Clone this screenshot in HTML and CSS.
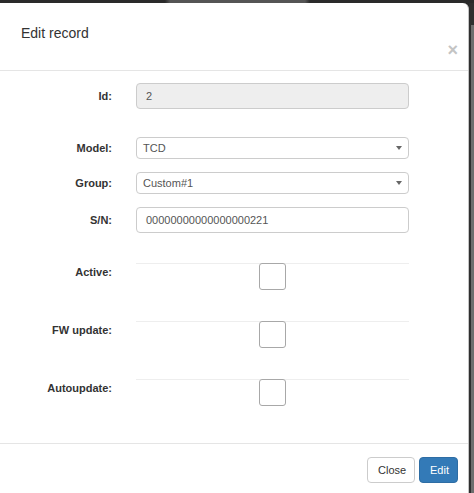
FILE: index.html
```html
<!DOCTYPE html>
<html lang="en">
<head>
<meta charset="utf-8">
<title>Edit record</title>
<link rel="stylesheet" href="styles.css">
</head>
<body>
<div class="page">
  <div class="topstrip"></div>
  <div class="main">
    <div class="modal">
      <div class="modal-header">
        <div class="modal-title">Edit record</div>
        <div class="close-row"><span class="close">&times;</span></div>
      </div>
      <div class="modal-body">
        <div class="row row-id">
          <div class="label">Id:</div>
          <div class="control input disabled">2</div>
        </div>
        <div class="row row-model">
          <div class="label">Model:</div>
          <div class="control select"><span>TCD</span><svg class="caret" width="6" height="4" viewBox="0 0 6 4"><path d="M0 0H6L3 4Z" fill="#666"/></svg></div>
        </div>
        <div class="row row-group">
          <div class="label">Group:</div>
          <div class="control select"><span>Custom#1</span><svg class="caret" width="6" height="4" viewBox="0 0 6 4"><path d="M0 0H6L3 4Z" fill="#666"/></svg></div>
        </div>
        <div class="row row-sn">
          <div class="label">S/N:</div>
          <div class="control input">00000000000000000221</div>
        </div>
        <div class="row check-row first-check">
          <div class="label">Active:</div>
          <div class="check-area"><span class="cb"></span></div>
        </div>
        <div class="row check-row">
          <div class="label">FW update:</div>
          <div class="check-area"><span class="cb"></span></div>
        </div>
        <div class="row check-row">
          <div class="label">Autoupdate:</div>
          <div class="check-area"><span class="cb"></span></div>
        </div>
      </div>
      <div class="modal-footer">
        <button class="btn btn-default">Close</button>
        <button class="btn btn-primary">Edit</button>
      </div>
    </div>
    <div class="gutter"><div class="scroll"></div></div>
  </div>
</div>
</body>
</html>
```

FILE: styles.css
```css
html, body {
  margin: 0;
  padding: 0;
}
body {
  width: 474px;
  height: 493px;
  overflow: hidden;
  background: #2a2a2a;
  font-family: "Liberation Sans", Arial, sans-serif;
  color: #333;
}
.page {
  display: flex;
  flex-direction: column;
  height: 493px;
}
.topstrip {
  height: 3px;
  background: linear-gradient(to right, #2a2a2a 0, #2a2a2a 165px, #555 170px, #555 305px, #2a2a2a 310px);
}
.main {
  display: flex;
  flex: 1;
  min-height: 0;
}
.modal {
  width: 469px;
  box-sizing: border-box;
  background: #fff;
  border-right: 1px solid #c4c4c4;
  border-radius: 0 6px 0 0;
  display: flex;
  flex-direction: column;
}
.gutter {
  width: 5px;
  background: #2f2f2f;
  display: flex;
  justify-content: flex-end;
  padding-top: 22px;
}
.scroll {
  width: 3px;
  background: #6e6e6e;
  height: 100%;
}
.modal-header {
  padding: 20px 10px 13px 21px;
  border-bottom: 1px solid #e5e5e5;
}
.modal-title {
  font-size: 14px;
  line-height: 20px;
  color: #333;
}
.close-row {
  display: flex;
  justify-content: flex-end;
}
.close {
  font-size: 18px;
  font-weight: bold;
  line-height: 14px;
  color: #c4c4c4;
}
.modal-body {
  flex: 1;
  padding-top: 12px;
  display: flex;
  flex-direction: column;
}
.row {
  display: flex;
  align-items: center;
  column-gap: 24px;
}
.label {
  width: 112px;
  text-align: right;
  font-size: 11px;
  font-weight: bold;
  line-height: 14px;
  color: #333;
}
.control {
  width: 273px;
  box-sizing: border-box;
  border: 1px solid #ccc;
  border-radius: 4px;
  font-size: 11px;
  color: #555;
  display: flex;
  align-items: center;
}
.input {
  height: 26px;
  padding: 0 9px;
}
.disabled {
  background: #eee;
}
.select {
  height: 22px;
  padding: 0 6px;
  justify-content: space-between;
}
.row-model { margin-top: 28px; }
.row-group { margin-top: 13px; }
.row-sn { margin-top: 13px; }
.check-row {
  align-items: flex-start;
  margin-top: 31px;
}
.first-check { margin-top: 30px; }
.check-row .label {
  padding-top: 2px;
}
.check-area {
  width: 273px;
  border-top: 1px solid #eee;
  display: flex;
  justify-content: center;
}
.cb {
  display: block;
  width: 27px;
  height: 27px;
  box-sizing: border-box;
  margin-top: -1px;
  border: 1px solid #a8a8a8;
  border-radius: 3px;
  background: #fff;
}
.modal-footer {
  border-top: 1px solid #e5e5e5;
  padding: 13px 10px 10px 0;
  display: flex;
  justify-content: flex-end;
  gap: 4px;
}
.btn {
  height: 26px;
  padding: 0 10px;
  font-family: "Liberation Sans", Arial, sans-serif;
  font-size: 11px;
  border-radius: 4px;
  border: 1px solid #ccc;
  cursor: pointer;
}
.btn-default {
  background: #fff;
  color: #333;
  width: 48px;
}
.btn-primary {
  background: #337ab7;
  border-color: #2e6da4;
  color: #fff;
  width: 39px;
}
```
